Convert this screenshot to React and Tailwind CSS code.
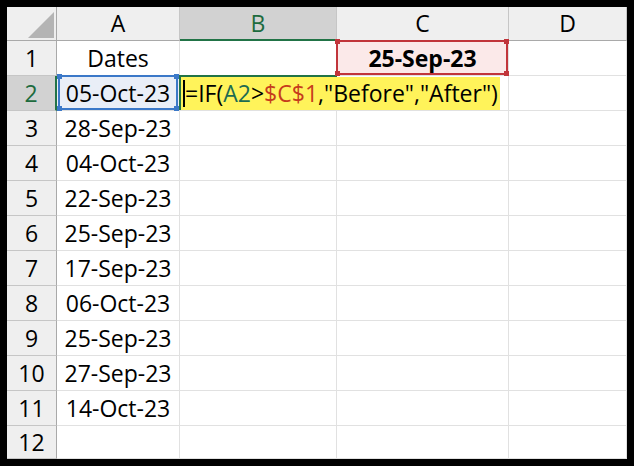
import React from "react";

// A small Excel-like sheet: dates in column A, IF formula being typed in B2
const dates = [
  "05-Oct-23",
  "28-Sep-23",
  "04-Oct-23",
  "22-Sep-23",
  "25-Sep-23",
  "17-Sep-23",
  "06-Oct-23",
  "25-Sep-23",
  "27-Sep-23",
  "14-Oct-23",
];

const font = { fontFamily: '"Open Sans", "Noto Sans", sans-serif' };

function Corner({ color }) {
  const pos = [
    "-left-[3px] -top-[3px]",
    "-right-[3px] -top-[3px]",
    "-left-[3px] -bottom-[3px]",
    "-right-[3px] -bottom-[3px]",
  ];
  return pos.map((p) => (
    <span key={p} className={`absolute w-[5px] h-[5px] ${p} ${color}`} />
  ));
}

function ColHeader({ label, active }) {
  if (active) {
    return (
      <div className="flex items-center justify-center bg-[#d2d2d2] text-[#1d6b3e] border-r border-[#c6c6c6] border-b-2 border-b-[#217346]">
        {label}
      </div>
    );
  }
  return (
    <div className="flex items-center justify-center bg-[#efefef] text-black border-r border-[#c6c6c6] border-b border-b-[#a9a9a9]">
      {label}
    </div>
  );
}

function RowHeader({ n, active }) {
  if (active) {
    return (
      <div className="flex items-center justify-center bg-[#d2d2d2] text-[#1d6b3e] border-b border-[#c6c6c6] border-r-2 border-r-[#217346]">
        {n}
      </div>
    );
  }
  return (
    <div className="flex items-center justify-center bg-[#efefef] text-black border-b border-[#c6c6c6] border-r border-r-[#a9a9a9]">
      {n}
    </div>
  );
}

function Cell({ children, className = "" }) {
  return (
    <div
      className={`relative flex items-center justify-center border-r border-b border-[#e1e1e1] whitespace-nowrap ${className}`}
    >
      {children}
    </div>
  );
}

export default function App() {
  const rows = [];
  for (let r = 1; r <= 12; r++) {
    const a = r === 1 ? "Dates" : dates[r - 2] || "";
    rows.push(
      <React.Fragment key={r}>
        <RowHeader n={r} active={r === 2} />
        {r === 2 ? (
          <Cell className="bg-[#e9eef7]">
            <span className="absolute inset-x-[1px] -top-[1px] bottom-0 border-2 border-[#3b78c8]">
              <Corner color="bg-[#3b78c8]" />
            </span>
            {a}
          </Cell>
        ) : (
          <Cell>{a}</Cell>
        )}
        {r === 2 ? (
          <Cell className="z-10 justify-start">
            <span className="absolute -left-[1px] -top-[1px] -right-[1px] bottom-0 border-2 border-[#217346]" />
            <span className="relative ml-[1px] flex items-center h-[33px] pl-[4px] pr-[2px] bg-[#fff35a]">
              <span className="absolute left-[2px] top-[3px] bottom-[3px] w-[1.5px] bg-black" />
              =IF(<span className="text-[#1e6b52]">A2</span>&gt;
              <span className="text-[#c63c1c]">$C$1</span>
              ,"Before","After")
            </span>
          </Cell>
        ) : (
          <Cell />
        )}
        {r === 1 ? (
          <Cell className="z-20 bg-[#fbe9e9] font-bold">
            <span className="absolute -left-[1px] -top-[1px] right-0 bottom-0 border-2 border-[#c1353b]">
              <Corner color="bg-[#c1353b]" />
            </span>
            25-Sep-23
          </Cell>
        ) : (
          <Cell />
        )}
        <Cell />
      </React.Fragment>
    );
  }

  return (
    <div className="w-[634px] h-[466px] bg-black p-[7px] overflow-hidden">
      <div
        className="grid h-full bg-white text-[23px] text-black overflow-hidden grid-cols-[50px_123px_157px_172px_118px] grid-rows-[34px_repeat(11,35px)_33px]"
        style={font}
      >
        <div className="relative bg-[#efefef] border-r border-r-[#a9a9a9] border-b border-b-[#a9a9a9]">
          <svg className="absolute left-[21px] top-[5px]" width="26" height="26" viewBox="0 0 26 26">
            <polygon points="26,0 26,26 0,26" fill="#b4b4b4" />
          </svg>
        </div>
        {["A", "B", "C", "D"].map((c) => (
          <ColHeader key={c} label={c} active={c === "B"} />
        ))}
        {rows}
      </div>
    </div>
  );
}
